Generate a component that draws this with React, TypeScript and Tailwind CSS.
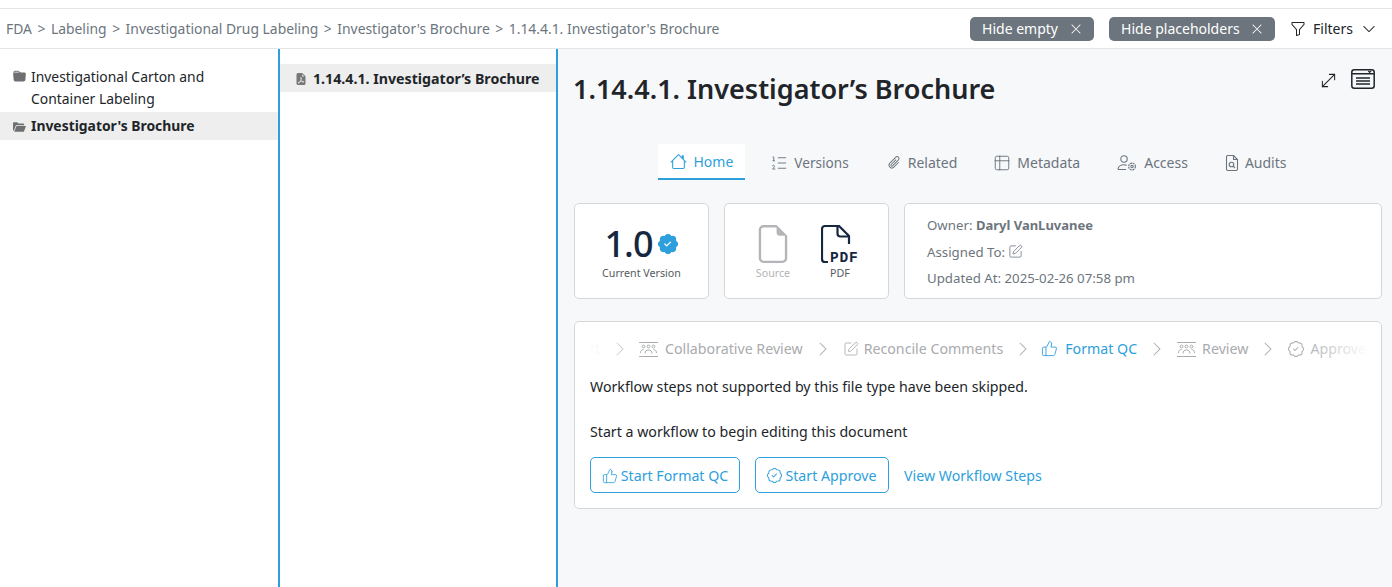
import {
  BsChevronDown,
  BsChevronRight,
  BsFileEarmark,
  BsFileEarmarkPdfFill,
  BsFolderFill,
  BsFunnel,
  BsHouse,
  BsPaperclip,
  BsPatchCheck,
  BsPatchCheckFill,
  BsXLg,
} from "react-icons/bs";
import { ListOrdered, MoveDiagonal, SquarePen, Table2, ThumbsUp } from "lucide-react";

const CRUMBS = ["FDA", "Labeling", "Investigational Drug Labeling", "Investigator's Brochure", "1.14.4.1. Investigator's Brochure"];

function AccessIcon({ className }: { className?: string }) {
  return (
    <svg viewBox="0 0 20 16" fill="none" stroke="currentColor" strokeWidth="1.1" className={className}>
      <circle cx="7" cy="4" r="3.2" />
      <path d="M1 14.5c0-3.2 3-4.8 6-4.8 1.2 0 2 .2 2.8.5M1 14.5h8" />
      <circle cx="15" cy="11.5" r="3.4" strokeDasharray="2 .7" />
      <circle cx="15" cy="11.5" r="1.2" />
    </svg>
  );
}

function AuditIcon({ className }: { className?: string }) {
  return (
    <svg viewBox="0 0 14 16" fill="none" stroke="currentColor" strokeWidth="1.1" className={className}>
      <path d="M3 .5h5.5l4 4V14a1.500 1.500 0 0 1-1.500 1.500H3A1.500 1.500 0 0 1 1.500 14V2A1.500 1.500 0 0 1 3 .5z" />
      <path d="M8.500.5v4h4" />
      <circle cx="6.500" cy="9.500" r="2.300" />
      <path d="M8.200 11.200l1.800 1.800" />
    </svg>
  );
}

function ReviewIcon({ className }: { className?: string }) {
  return (
    <svg viewBox="0 0 19 15" fill="none" stroke="currentColor" strokeWidth="1" className={className}>
      <path d="M0 .5h19M0 14.500h19" />
      <circle cx="4.500" cy="4.500" r="1.400" />
      <circle cx="9.500" cy="4.500" r="1.400" />
      <circle cx="14.500" cy="4.500" r="1.400" />
      <path d="M1.500 11c0-2.500 1.500-3.500 3-3.500M17.500 11c0-2.500-1.500-3.500-3-3.500M6 11.500c0-2.500 1.500-3.500 3.500-3.500s3.500 1 3.500 3.500" />
    </svg>
  );
}

function OpenFolderIcon({ className }: { className?: string }) {
  return (
    <svg viewBox="0 0 14 12" fill="currentColor" className={className}>
      <path d="M0 2a1 1 0 0 1 1-1h3.500l1.200 1.300H11a1 1 0 0 1 1 1V4H3.200L.9 10 0 9.500z" />
      <path d="M3.800 5H14l-2.300 6H1.300z" />
    </svg>
  );
}

function PanelIcon({ className }: { className?: string }) {
  return (
    <svg viewBox="0 0 24 20" fill="none" stroke="currentColor" strokeWidth="1.500" className={className}>
      <rect x=".8" y=".8" width="22.400" height="18.400" rx="2.500" />
      <path d="M.8 4.800h22.400M5 9h14M5 12h14M5 15h14" />
      <path d="M17.200 1.900l1.500 1.500 1.500-1.500" strokeWidth="1.100" />
    </svg>
  );
}

function PdfIcon({ className }: { className?: string }) {
  return (
    <svg viewBox="0 0 38 41" fill="none" className={className}>
      <path d="M7 37H4a3 3 0 0 1-3-3V4a3 3 0 0 1 3-3h14l10 10v8" stroke="#16283f" strokeWidth="2.200" />
      <path d="M16.500 1v7.500a3 3 0 0 0 3 3H28" stroke="#16283f" strokeWidth="2.200" />
      <text x="37.500" y="37" textAnchor="end" fontSize="14.500" fontWeight="700" letterSpacing=".8" fill="#16283f" fontFamily="'Liberation Mono',monospace">
        PDF
      </text>
    </svg>
  );
}

function Chip({ label, width }: { label: string; width: string }) {
  return (
    <div className={`h-6 rounded-[5px] bg-[#6c757d] text-white text-[14px] flex items-center px-3 justify-between ${width}`}>
      {label}
      <BsXLg className="w-[12px] h-[12px]" />
    </div>
  );
}

export default function App() {
  return (
    <div className="h-screen w-screen overflow-hidden bg-white flex flex-col text-[#212529] font-['Noto_Sans',sans-serif]">
      <div className="h-[9px] shrink-0 border-b border-[#e3e5e9]" />

      {/* Breadcrumb bar */}
      <div className="h-10 shrink-0 border-b border-[#e3e5e9] flex items-center pl-[6px] pr-[16px]">
        <div className="flex-1 flex items-center gap-[5.5px] pt-[1px] text-[13.9px] text-[#6c757d] whitespace-nowrap">
          {CRUMBS.map((crumb, i) => (
            <span key={crumb} className="flex items-center gap-[5.5px]">
              {i > 0 && <span>&gt;</span>}
              {crumb}
            </span>
          ))}
        </div>
        <div className="flex items-center">
          <Chip label="Hide empty" width="w-[124px]" />
          <div className="w-[15px]" />
          <Chip label="Hide placeholders" width="w-[166px]" />
          <div className="flex items-center ml-[15px] text-[14px]">
            <BsFunnel className="w-[16px] h-[16px] mr-[7px]" />
            Filters
            <BsChevronDown className="w-[14px] h-[14px] ml-[9px]" />
          </div>
        </div>
      </div>

      <div className="flex-1 flex min-h-0">
        {/* Folder tree */}
        <div className="w-[280px] shrink-0 border-r-2 border-[#2d9fdc] pt-[17px] text-[13.9px]">
          <div className="flex pl-[13px] pr-[40px] leading-[22px] pb-[2px]">
            <BsFolderFill className="w-[13px] h-[13px] mt-[4px] mr-[5px] shrink-0 text-[#6f6f6f]" />
            <span>Investigational Carton and Container Labeling</span>
          </div>
          <div className="h-7 bg-[#eeeeee] flex items-center pl-[13px] pt-[1px] font-bold">
            <OpenFolderIcon className="w-[13px] h-[12px] mr-[5px] text-[#6f6f6f]" />
            Investigator's Brochure
          </div>
        </div>

        {/* File list */}
        <div className="w-[278px] shrink-0 border-r-2 border-[#2d9fdc] pt-[15px]">
          <div className="h-7 bg-[#eeeeee] flex items-center pl-[15px] pt-[1px] text-[14.2px] font-bold whitespace-nowrap">
            <BsFileEarmarkPdfFill className="w-[12px] h-[12px] mr-[6px] text-[#777777]" />
            1.14.4.1. Investigator’s Brochure
          </div>
        </div>

        {/* Detail */}
        <div className="flex-1 min-w-0 bg-[#f7f8fa] pl-4 pr-[10px]">
          <div className="flex justify-between pt-5 h-[95px]">
            <h1 className="text-[27px] leading-[40px] font-semibold -ml-[1px]">1.14.4.1. Investigator’s Brochure</h1>
            <div className="flex gap-[12px] pr-[7px]">
              <MoveDiagonal className="w-[21px] h-[21px] mt-[1px]" strokeWidth={1.2} />
              <PanelIcon className="w-[24px] h-[20px]" />
            </div>
          </div>

          <div className="flex justify-center items-center h-[36px] text-[14px] text-[#6c757d] pr-[12px]">
            <div className="h-[36px] bg-white border-b-2 border-[#2d9fdc] text-[#2d9fdc] px-[12px] flex items-center gap-[7px]">
              <BsHouse className="w-[17px] h-[17px]" />
              Home
            </div>
            <div className="ml-[25px] pt-[2px] flex items-center gap-[6px] text-[13.6px]">
              <ListOrdered className="w-[18px] h-[18px]" strokeWidth={1.25} />
              Versions
            </div>
            <div className="ml-[38px] pt-[1px] flex items-center gap-[6px]">
              <BsPaperclip className="w-[15px] h-[15px] rotate-45" />
              Related
            </div>
            <div className="ml-[36px] pt-[1px] flex items-center gap-[6px]">
              <Table2 className="w-[18px] h-[18px]" strokeWidth={1.25} />
              Metadata
            </div>
            <div className="ml-[37px] pt-[1px] flex items-center gap-[7px]">
              <AccessIcon className="w-[20px] h-[16px]" />
              Access
            </div>
            <div className="ml-[37px] pt-[1px] flex items-center gap-[6px]">
              <AuditIcon className="w-[14px] h-[16px]" />
              Audits
            </div>
          </div>

          <div className="flex gap-[15px] mt-[23px] h-[96px]">
            <div className="w-[135px] bg-white border border-[#d5d7da] rounded-[5px] flex flex-col items-center pt-[17px]">
              <div className="flex items-center gap-[6px] text-[#16283f]">
                <span className="text-[36px] leading-[46px] font-medium tracking-[-1px]">1.0</span>
                <BsPatchCheckFill className="w-[20px] h-[20px] text-[#2d9fdc]" />
              </div>
              <span className="text-[10.7px] leading-[16px] text-[#555b61] mt-[-2px]">Current Version</span>
            </div>

            <div className="w-[165px] bg-white border border-[#d5d7da] rounded-[5px] flex justify-center gap-[29px] pt-[21px] text-[10.7px]">
              <div className="flex flex-col items-center text-[#b3b5b8]">
                <BsFileEarmark className="w-[38px] h-[38px]" />
                <span className="leading-[16px] mt-[2px]">Source</span>
              </div>
              <div className="flex flex-col items-center text-[#555b61]">
                <PdfIcon className="w-[38px] h-[41px] -mb-[3px]" />
                <span className="leading-[16px] mt-[2px]">PDF</span>
              </div>
            </div>

            <div className="flex-1 bg-white border border-[#d5d7da] rounded-[5px] pl-[22px] pt-[8px] text-[13.25px] leading-[26.5px] text-[#6c757d]">
              <div>
                Owner: <b className="font-bold text-[13px]">Daryl VanLuvanee</b>
              </div>
              <div className="flex items-center gap-[3px]">
                Assigned To:
                <SquarePen className="w-[15px] h-[15px]" strokeWidth={1.25} />
              </div>
              <div>Updated At: 2025-02-26 07:58 pm</div>
            </div>
          </div>

          <div className="mt-[22px] h-[188px] bg-white border border-[#d5d7da] rounded-[5px] px-[15px] pt-[15px] text-[14.2px]">
            {/* Stepper fades out at both ends */}
            <div className="relative h-[24px] overflow-hidden text-[#a9abae] -mx-[4px]">
              <div className="flex items-center whitespace-nowrap h-full pl-[4px]">
                <span className="w-[10px] text-[#dddddd]">ft</span>
                <BsChevronRight className="w-[16px] h-[16px] ml-[12px] mr-[11px]" />
                <ReviewIcon className="w-[19px] h-[15px] mr-[7px]" />
                <span>Collaborative Review</span>
                <BsChevronRight className="w-[16px] h-[16px] mx-[12px]" />
                <SquarePen className="w-[16px] h-[16px] mr-[5px]" strokeWidth={1.25} />
                <span>Reconcile Comments</span>
                <BsChevronRight className="w-[16px] h-[16px] ml-[12px] mr-[10px]" />
                <span className="flex items-center gap-[7px] text-[#2d9fdc]">
                  <ThumbsUp className="w-[17px] h-[17px]" strokeWidth={1.25} />
                  Format QC
                </span>
                <BsChevronRight className="w-[16px] h-[16px] mx-[12px]" />
                <ReviewIcon className="w-[19px] h-[15px] mr-[6px]" />
                <span>Review</span>
                <BsChevronRight className="w-[16px] h-[16px] mx-[12px]" />
                <BsPatchCheck className="w-[16px] h-[16px] mr-[6px]" />
                <span>Approve</span>
              </div>
              <div className="absolute inset-y-0 left-0 w-[60px] bg-gradient-to-r from-white to-transparent" />
              <div className="absolute inset-y-0 right-0 w-[70px] bg-gradient-to-l from-white to-transparent" />
            </div>

            <p className="mt-[15px] leading-[22px]">Workflow steps not supported by this file type have been skipped.</p>
            <p className="mt-[23px] leading-[22px]">Start a workflow to begin editing this document</p>

            <div className="flex items-center mt-[14px] text-[#2d9fdc]">
              <div className="h-9 w-[150px] border border-[#2d9fdc] rounded-[5px] flex items-center justify-center gap-[3px] pt-[1px]">
                <ThumbsUp className="w-[16px] h-[16px]" strokeWidth={1.25} />
                Start Format QC
              </div>
              <div className="h-9 w-[134px] ml-[15px] border border-[#2d9fdc] rounded-[5px] flex items-center justify-center gap-[3px] pt-[1px]">
                <BsPatchCheck className="w-[15px] h-[15px]" />
                Start Approve
              </div>
              <span className="ml-[15px] pt-[2px]">View Workflow Steps</span>
            </div>
          </div>
        </div>
      </div>
    </div>
  );
}
